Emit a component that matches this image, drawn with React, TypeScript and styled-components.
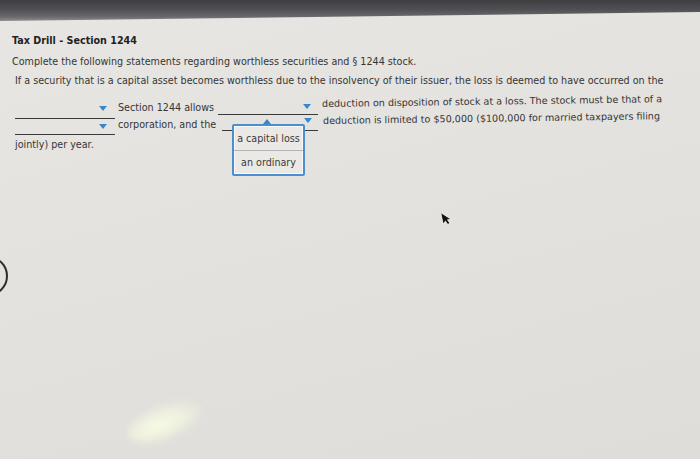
import React from "react";
import styled, { createGlobalStyle } from "styled-components";

const GlobalStyle = createGlobalStyle`
  html, body { margin: 0; padding: 0; }
  body { background: #e3e1dd; font-family: "DejaVu Sans", Verdana, sans-serif; }
`;

const Page = styled.div`
  position: relative;
  width: 700px;
  height: 459px;
  overflow: hidden;
  background: linear-gradient(165deg, #e8e6e2 0%, #e4e2de 45%, #dfddd9 100%);
  color: #353535;
  font-size: 9.6px;
`;

const TopBar = styled.div`
  height: 21px;
  background: linear-gradient(180deg, #3e3e41 0%, #505054 45%, #6a6a6e 80%, #8e8e90 100%);
  clip-path: polygon(0 0, 100% 0, 100% 12px, 0 21px);
`;

const Content = styled.div`
  padding: 14px 0 0 12px;
`;

const Title = styled.div`
  font-weight: bold;
  font-size: 9.6px;
  line-height: 12px;
  color: #222;
`;

const Intro = styled.div`
  margin-top: 9px;
  line-height: 12px;
`;

const Question = styled.div`
  margin-top: 7px;
  padding-left: 3px;
  display: flex;
  flex-direction: column;
`;

const Row = styled.div<{ $gap: number }>`
  display: flex;
  align-items: flex-start;
  margin-top: ${(p) => p.$gap}px;
  white-space: nowrap;
`;

const Text = styled.span<{ $lift?: number; $w?: number; $ml?: number; $tilt?: boolean }>`
  display: inline-block;
  line-height: 12px;
  margin-top: ${(p) => -(p.$lift ?? 0)}px;
  margin-left: ${(p) => p.$ml ?? 0}px;
  ${(p) => (p.$w ? `width: ${p.$w}px;` : "")}
  ${(p) => (p.$tilt ? "transform: rotate(-0.8deg); transform-origin: left center;" : "")}
`;

const Select = styled.span<{ $w: number; $h: number; $lift?: number; $pr?: number }>`
  position: relative;
  display: inline-flex;
  justify-content: flex-end;
  align-items: flex-start;
  box-sizing: border-box;
  flex: none;
  width: ${(p) => p.$w}px;
  height: ${(p) => p.$h}px;
  margin-top: ${(p) => -(p.$lift ?? 0)}px;
  padding: 3.5px ${(p) => p.$pr ?? 8}px 0 0;
  border-bottom: 1px solid #3a3a3a;
`;

const Caret = styled.span`
  width: 0;
  height: 0;
  border-left: 4.5px solid transparent;
  border-right: 4.5px solid transparent;
  border-top: 5px solid #3b85c9;
`;

const UpCaret = styled.span`
  position: absolute;
  left: 41px;
  top: 5px;
  width: 0;
  height: 0;
  border-left: 4.5px solid transparent;
  border-right: 4.5px solid transparent;
  border-bottom: 5px solid #3b85c9;
  z-index: 3;
`;

const Popup = styled.div`
  position: absolute;
  left: 10px;
  top: 10px;
  width: 73px;
  box-sizing: border-box;
  border: 2px solid #4b8fd1;
  border-radius: 2px;
  background: #ebe9e5;
  box-shadow: inset 0 0 0 1px rgba(255, 255, 255, 0.7);
  display: flex;
  flex-direction: column;
  z-index: 2;
`;

const Option = styled.div<{ $sep?: boolean }>`
  height: 24px;
  box-sizing: border-box;
  display: flex;
  align-items: center;
  justify-content: center;
  color: #3a3a3a;
  ${(p) => (p.$sep ? "border-top: 1px solid #b4b4b4;" : "")}
`;

const Arc = styled.div`
  position: absolute;
  left: -32px;
  top: 256px;
  width: 40px;
  height: 40px;
  box-sizing: border-box;
  border: 2px solid #2e2e2e;
  border-radius: 50%;
`;

const Cursor = styled.svg`
  position: absolute;
  left: 442px;
  top: 212px;
  transform: rotate(-12deg);
`;

const Glare = styled.div`
  position: absolute;
  left: 126px;
  top: 404px;
  width: 78px;
  height: 34px;
  border-radius: 50%;
  background: radial-gradient(ellipse at 40% 55%, rgba(250, 255, 228, 0.9) 0%, rgba(245, 250, 225, 0.55) 45%, rgba(240, 240, 225, 0) 75%);
  transform: rotate(-22deg);
  filter: blur(3px);
`;

export default function App() {
  return (
    <>
      <GlobalStyle />
      <Page>
        <TopBar />
        <Content>
          <Title>Tax Drill - Section 1244</Title>
          <Intro>Complete the following statements regarding worthless securities and § 1244 stock.</Intro>
          <Question>
            <Row $gap={0}>
              <Text>
                If a security that is a capital asset becomes worthless due to the insolvency of their issuer, the loss is deemed to have occurred on the
              </Text>
            </Row>
            <Row $gap={15}>
              <Select $w={100} $h={17}>
                <Caret />
              </Select>
              <Text $ml={3} $w={100}>Section 1244 allows</Text>
              <Select $w={100} $h={15} $lift={2} $pr={7}>
                <Caret />
              </Select>
              <Text $ml={4} $lift={4} $tilt>
                deduction on disposition of stock at a loss. The stock must be that of a
              </Text>
            </Row>
            <Row $gap={1}>
              <Select $w={100} $h={15}>
                <Caret />
              </Select>
              <Text $ml={3} $lift={1} $w={104}>corporation, and the</Text>
              <Select $w={96} $h={17} $lift={6} $pr={6}>
                <Caret />
                <UpCaret />
                <Popup>
                  <Option>a capital loss</Option>
                  <Option $sep>an ordinary</Option>
                </Popup>
              </Select>
              <Text $ml={5} $lift={5} $tilt>
                deduction is limited to $50,000 ($100,000 for married taxpayers filing
              </Text>
            </Row>
            <Row $gap={4}>
              <Text>jointly) per year.</Text>
            </Row>
          </Question>
        </Content>
        <Arc />
        <Cursor width="9" height="13" viewBox="0 0 9 13">
          <path d="M0.5 0.5 L0.5 10.5 L3 8.2 L4.8 12.2 L6.3 11.5 L4.6 7.6 L7.8 7.6 Z" fill="#111" />
        </Cursor>
        <Glare />
      </Page>
    </>
  );
}
